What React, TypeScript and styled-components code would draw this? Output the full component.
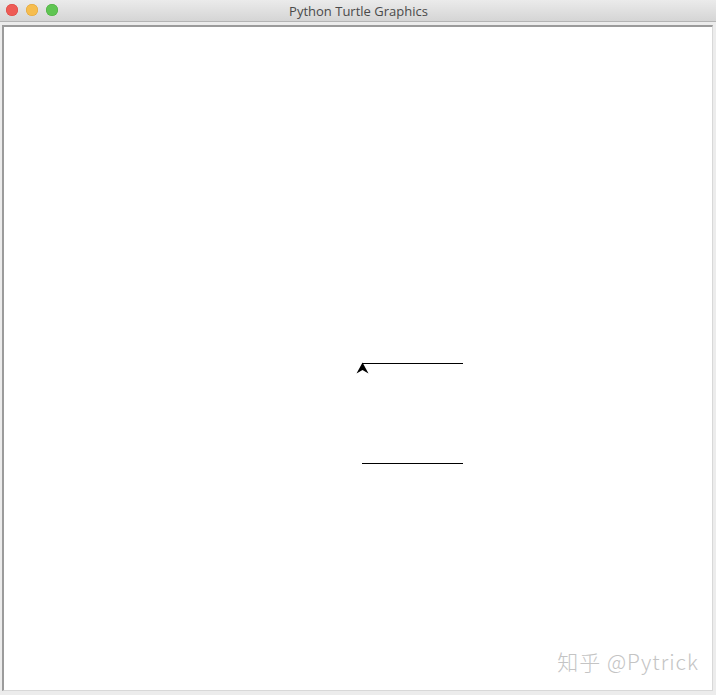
import React from "react";
import styled, { createGlobalStyle } from "styled-components";

const Global = createGlobalStyle`
  html, body { margin: 0; padding: 0; background: #ececec; }
  body { width: 716px; height: 695px; overflow: hidden; font-family: "Liberation Sans", "Noto Sans", sans-serif; }
`;

const Window = styled.div`
  width: 716px;
  height: 695px;
  display: flex;
  flex-direction: column;
  background: #ececec;
`;

const TitleBar = styled.div`
  height: 22px;
  flex: none;
  position: relative;
  display: flex;
  align-items: center;
  justify-content: center;
  background: linear-gradient(#ebebeb, #d5d5d5);
  border-bottom: 1px solid #b4b4b4;
  box-sizing: border-box;
`;

const Lights = styled.div`
  position: absolute;
  left: 6px;
  top: 4px;
  display: flex;
  gap: 8px;
`;

const Light = styled.span<{ $c: string; $b: string }>`
  width: 12px;
  height: 12px;
  border-radius: 50%;
  background: ${(p) => p.$c};
  box-shadow: inset 0 0 0 0.5px ${(p) => p.$b};
`;

const Title = styled.span`
  font-family: "Open Sans", "Liberation Sans", sans-serif;
  font-size: 13px;
  color: #4a4a4a;
  line-height: 22px;
  padding-left: 1px;
`;

const Body = styled.div`
  flex: 1;
  padding: 3px 3px 4px 2px;
  display: flex;
`;

const Canvas = styled.div`
  flex: 1;
  position: relative;
  background: #fff;
  border-top: 2px solid #9b9b9b;
  border-left: 2px solid #9b9b9b;
  border-right: 1px solid #d8d8d8;
  border-bottom: 1px solid #d8d8d8;
  overflow: hidden;
`;

const Drawing = styled.svg`
  display: block;
  width: 100%;
  height: 100%;
`;

const Watermark = styled.div`
  position: absolute;
  right: 13px;
  bottom: 17px;
  font-family: "Noto Sans CJK SC", "Noto Sans", sans-serif;
  font-weight: 300;
  font-size: 21px;
  line-height: 24px;
  letter-spacing: 1px;
  color: #c4c4c4;
  white-space: nowrap;
`;

export default function App() {
  return (
    <>
      <Global />
      <Window>
        <TitleBar>
          <Lights>
            <Light $c="#ee5b55" $b="#d9443e" />
            <Light $c="#f6bd4e" $b="#dea236" />
            <Light $c="#5fc552" $b="#4aaa3d" />
          </Lights>
          <Title>Python Turtle Graphics</Title>
        </TitleBar>
        <Body>
          <Canvas>
            <Drawing viewBox="4 27 708 662" preserveAspectRatio="xMinYMin meet">
              <line x1="362" y1="363.5" x2="463" y2="363.5" stroke="#000" strokeWidth="1" />
              <line x1="362" y1="463.5" x2="463" y2="463.5" stroke="#000" strokeWidth="1" />
              <polygon points="362.5,362.5 368.5,373.5 362.5,370 356.5,373.5" fill="#000" />
            </Drawing>
            <Watermark>知乎 @Pytrick</Watermark>
          </Canvas>
        </Body>
      </Window>
    </>
  );
}
